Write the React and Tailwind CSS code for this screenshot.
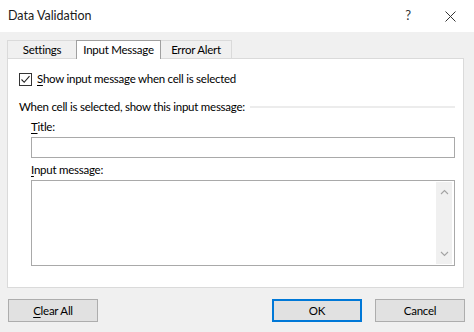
import React from "react";

export default function App() {
  const font = { fontFamily: 'Lato, "Noto Sans", Arial, sans-serif' };
  return (
    <div className="w-[474px] h-[332px] bg-[#f0f0f0] text-[#000] overflow-hidden flex flex-col" style={font}>
      {/* Title bar */}
      <div className="h-[32px] bg-white flex items-center pl-[8px] pr-[18px] shrink-0">
        <div className="text-[12.5px] text-[#1a1a1a] flex-1">Data Validation</div>
        <div className="text-[13px] text-[#333] mr-[34px]">?</div>
        <svg width="11" height="11" viewBox="0 0 11 11" className="mt-[1px]">
          <path d="M0.5 0.5 L10.5 10.5 M10.5 0.5 L0.5 10.5" stroke="#333" strokeWidth="1" />
        </svg>
      </div>

      {/* Tabs */}
      <div className="pl-[7px] pt-[8px] shrink-0 text-[11.5px] tracking-[-0.25px]">
        <div className="flex items-end h-[19px] relative z-10 whitespace-nowrap">
          <div className="w-[69px] h-[18px] flex items-center justify-center border-t border-l border-[#dadada] mb-[1px]">Settings</div>
          <div className="w-[85px] h-[19px] flex items-center justify-center border border-b-0 border-[#a0a0a0] bg-white">Input Message</div>
          <div className="w-[71px] h-[18px] flex items-center justify-center border-t border-r border-[#dadada] mb-[1px]">Error Alert</div>
        </div>
        {/* Panel */}
        <div className="w-[457px] h-[230px] -mt-[1px] bg-white border border-[#dadada] relative">
          <div className="flex items-center pl-[11px] pt-[13px]">
            <div className="w-[13px] h-[13px] border border-[#333] flex items-center justify-center bg-white">
              <svg width="11" height="11" viewBox="0 0 11 11">
                <path d="M1.5 5.5 L4.2 8.3 L9.5 2.2" stroke="#222" strokeWidth="1.1" fill="none" />
              </svg>
            </div>
            <div className="ml-[5px] leading-[14px]"><span className="underline underline-offset-2">S</span>how input message when cell is selected</div>
          </div>

          <div className="flex items-center pl-[11px] pr-[8px] mt-[13px]">
            <div className="leading-[16px] whitespace-nowrap">When cell is selected, show this input message:</div>
            <div className="flex-1 h-[2px] ml-[5px] bg-[#ececec]"></div>
          </div>

          <div className="pl-[23px] pr-[8px]">
            <div className="mt-[4px] leading-[16px]"><span className="underline underline-offset-2">T</span>itle:</div>
            <div className="mt-[2px] h-[21px] border border-[#a9a9a9] bg-white"></div>
            <div className="mt-[4px] leading-[16px]"><span className="underline underline-offset-2">I</span>nput message:</div>
            <div className="mt-[2px] h-[86px] border border-[#a9a9a9] bg-white flex justify-end p-[1px]">
              <div className="w-[16px] h-full bg-[#f0f0f0] flex flex-col items-center justify-between py-[7px] mr-[1px]">
                <svg width="9" height="6" viewBox="0 0 9 6">
                  <path d="M1 5 L4.5 1.5 L8 5" stroke="#a3a3a3" strokeWidth="1.1" fill="none" />
                </svg>
                <svg width="9" height="6" viewBox="0 0 9 6">
                  <path d="M1 1 L4.5 4.5 L8 1" stroke="#a3a3a3" strokeWidth="1.1" fill="none" />
                </svg>
              </div>
            </div>
          </div>
        </div>
      </div>

      {/* Buttons */}
      <div className="flex items-center px-[8px] mt-[11px] text-[11.5px] tracking-[-0.25px]">
        <div className="w-[90px] h-[23px] bg-[#e1e1e1] border border-[#adadad] flex items-center justify-center">
          <span><span className="underline underline-offset-2">C</span>lear All</span>
        </div>
        <div className="flex-1"></div>
        <div className="w-[90px] h-[23px] bg-[#e1e1e1] border-2 border-[#0078d7] flex items-center justify-center">OK</div>
        <div className="w-[90px] h-[23px] ml-[13px] mr-[1px] bg-[#e1e1e1] border border-[#adadad] flex items-center justify-center">Cancel</div>
      </div>
    </div>
  );
}
